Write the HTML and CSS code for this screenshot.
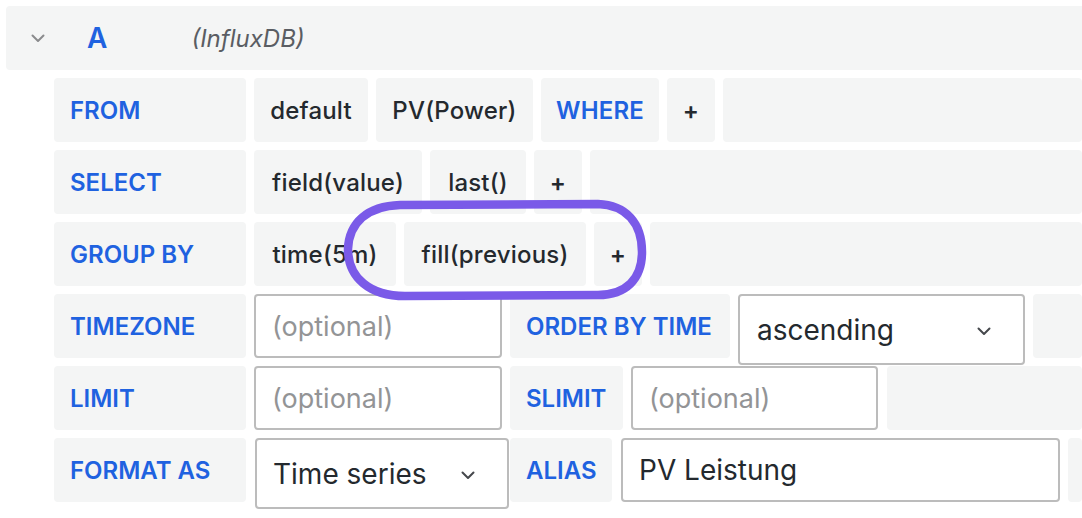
FILE: index.html
```html
<!DOCTYPE html>
<html lang="en">
<head>
<meta charset="utf-8">
<title>Query editor</title>
<link rel="stylesheet" href="styles.css">
</head>
<body>
<div class="editor">
  <div class="query-header">
    <svg class="collapse-icon" width="14" height="9" viewBox="0 0 14 9"><polyline points="1.5,1.5 7,7 12.5,1.5" fill="none" stroke="#8a8b8d" stroke-width="2" stroke-linecap="round" stroke-linejoin="round"/></svg>
    <span class="ref-id">A</span>
    <span class="ds-name">(InfluxDB)</span>
  </div>

  <div class="query-rows">
    <div class="row">
      <div class="cell label">FROM</div>
      <div class="cell part w-default">default</div>
      <div class="cell part w-measure">PV(Power)</div>
      <div class="cell part keyword w-where">WHERE</div>
      <div class="cell part plus">+</div>
      <div class="cell filler"></div>
    </div>

    <div class="row">
      <div class="cell label">SELECT</div>
      <div class="cell part w-field">field(value)</div>
      <div class="cell part w-last">last()</div>
      <div class="cell part plus">+</div>
      <div class="cell filler"></div>
    </div>

    <div class="row">
      <div class="cell label">GROUP BY</div>
      <div class="cell part w-time">time(5m)</div>
      <div class="cell part w-fill">fill(previous)</div>
      <div class="cell part plus">+</div>
      <div class="cell filler"></div>
    </div>

    <div class="row">
      <div class="cell label">TIMEZONE</div>
      <div class="field input-tz"><span class="placeholder">(optional)</span></div>
      <div class="cell keyword w-order">ORDER BY TIME</div>
      <div class="field select select-order">
        <span class="value">ascending</span>
        <svg class="select-chevron" width="14" height="9" viewBox="0 0 14 9"><polyline points="1.5,1.5 7,7 12.5,1.5" fill="none" stroke="#45484c" stroke-width="2" stroke-linecap="round" stroke-linejoin="round"/></svg>
      </div>
      <div class="cell filler"></div>
    </div>

    <div class="row">
      <div class="cell label">LIMIT</div>
      <div class="field input-tz"><span class="placeholder">(optional)</span></div>
      <div class="cell keyword w-slimit">SLIMIT</div>
      <div class="field input-slimit"><span class="placeholder">(optional)</span></div>
      <div class="cell filler filler-wide-gap"></div>
    </div>

    <div class="row">
      <div class="cell label">FORMAT AS</div>
      <div class="field select select-format">
        <span class="value">Time series</span>
        <svg class="select-chevron" width="14" height="9" viewBox="0 0 14 9"><polyline points="1.5,1.5 7,7 12.5,1.5" fill="none" stroke="#45484c" stroke-width="2" stroke-linecap="round" stroke-linejoin="round"/></svg>
      </div>
      <div class="cell keyword alias-label">ALIAS</div>
      <div class="field input-alias"><span class="value">PV Leistung</span></div>
      <div class="cell filler"></div>
    </div>
  </div>

  <svg class="annotation" width="1082" height="518" viewBox="0 0 1082 518">
    <path d="M 400 199 C 367 200, 349 217, 348 243 C 348 272, 370 290, 405 290 L 598 289 C 626 289, 642 273, 642 246 C 642 217, 626 199, 598 198 Z" fill="none" stroke="#7a5ae8" stroke-width="8.5" stroke-linejoin="round"/>
  </svg>
</div>
</body>
</html>
```

FILE: styles.css
```css
html, body {
  margin: 0;
  padding: 0;
  background: #ffffff;
}

body {
  font-family: Inter, "Noto Sans", "Liberation Sans", sans-serif;
  color: #24292e;
  overflow: hidden;
}

.editor {
  position: relative;
  width: 1082px;
  height: 518px;
}

.query-header {
  display: flex;
  align-items: center;
  height: 64px;
  margin: 6px 0 0 6px;
  padding-left: 25px;
  background: #f4f5f5;
  border-radius: 4px 0 0 4px;
}

.collapse-icon {
  display: block;
  margin-top: 1px;
}

.ref-id {
  margin-left: 42px;
  font-size: 28px;
  font-weight: 600;
  color: #1f62e0;
}

.ds-name {
  margin-left: 84px;
  font-size: 24px;
  font-style: italic;
  color: #5a5d63;
}

.query-rows {
  display: flex;
  flex-direction: column;
  gap: 8px;
  margin: 8px 0 0 54px;
}

.row {
  display: flex;
  gap: 8px;
  height: 64px;
}

.cell {
  box-sizing: border-box;
  display: flex;
  align-items: center;
  padding: 0 16px;
  background: #f4f5f5;
  border-radius: 4px;
  font-size: 24px;
  font-weight: 500;
  color: #24292e;
  white-space: nowrap;
}

.part {
  flex: none;
  justify-content: center;
  padding: 0;
  letter-spacing: 0.2px;
}

.label {
  width: 192px;
  flex: none;
  color: #1f62e0;
  font-weight: 600;
}

.keyword {
  color: #1f62e0;
  font-weight: 600;
}

.plus {
  width: 48px;
  font-weight: 600;
}

.w-default { width: 114px; }
.w-measure { width: 157px; }
.w-where { width: 118px; }
.w-field { width: 168px; }
.w-last { width: 96px; }
.w-time { width: 142px; }
.w-fill { width: 182px; }
.w-order { width: 220px; flex: none; }
.w-slimit { width: 113px; flex: none; }

.filler {
  flex: 1;
  padding: 0;
}

.filler-wide-gap {
  margin-left: 1px;
}

.alias-label {
  width: 102px;
  flex: none;
  margin-left: -7px;
  margin-right: 1px;
}

.field {
  box-sizing: border-box;
  display: flex;
  align-items: center;
  flex: none;
  padding: 0 16px;
  background: #ffffff;
  border: 2px solid #bcbcbc;
  border-radius: 4px;
  font-size: 27px;
  white-space: nowrap;
}

.placeholder {
  color: #939496;
}

.value {
  color: #24292e;
}

.input-tz {
  width: 248px;
}

.input-slimit {
  width: 247px;
}

.input-alias {
  width: 439px;
  font-size: 28px;
}

.select {
  align-self: flex-start;
  height: 71px;
  justify-content: space-between;
  padding-right: 32px;
  font-size: 28px;
}

.select-order {
  width: 287px;
  padding-left: 17px;
}

.select-format {
  width: 254px;
  margin-left: 1px;
}

.select-chevron {
  display: block;
  margin-top: 4px;
}

.annotation {
  position: absolute;
  left: 0;
  top: 0;
  pointer-events: none;
}
```
